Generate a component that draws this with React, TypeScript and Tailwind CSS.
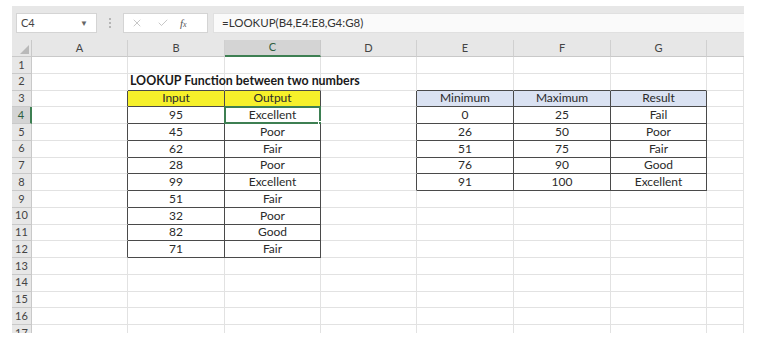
import React from "react";
import { X, Check } from "lucide-react";

const input: [string, string][] = [
  ["95", "Excellent"],
  ["45", "Poor"],
  ["62", "Fair"],
  ["28", "Poor"],
  ["99", "Excellent"],
  ["51", "Fair"],
  ["32", "Poor"],
  ["82", "Good"],
  ["71", "Fair"],
];
const lookup: [string, string, string][] = [
  ["0", "25", "Fail"],
  ["26", "50", "Poor"],
  ["51", "75", "Fair"],
  ["76", "90", "Good"],
  ["91", "100", "Excellent"],
];

function cellText(r: number, c: number): string {
  if (r === 3) {
    if (c === 2) return "Input";
    if (c === 3) return "Output";
    if (c === 5) return "Minimum";
    if (c === 6) return "Maximum";
    if (c === 7) return "Result";
  }
  if (r >= 4 && r <= 12) {
    if (c === 2) return input[r - 4][0];
    if (c === 3) return input[r - 4][1];
  }
  if (r >= 4 && r <= 8) {
    if (c >= 5 && c <= 7) return lookup[r - 4][c - 5];
  }
  return "";
}

function inT1(r: number, c: number) {
  return r >= 3 && r <= 12 && c >= 2 && c <= 3;
}
function inT2(r: number, c: number) {
  return r >= 3 && r <= 8 && c >= 5 && c <= 7;
}

function Cell({ r, c }: { r: number; c: number }) {
  const rightDark =
    inT1(r, c) || inT2(r, c) || (c === 1 && r >= 3 && r <= 12) || (c === 4 && r >= 3 && r <= 8);
  const bottomDark =
    inT1(r, c) || inT2(r, c) || (r === 2 && (c === 2 || c === 3 || (c >= 5 && c <= 7)));
  const yellow = r === 3 && (c === 2 || c === 3);
  const blue = r === 3 && c >= 5 && c <= 7;
  const text = cellText(r, c);
  const selected = r === 4 && c === 3;
  return (
    <div
      className={`relative h-[16.75px] border-r border-b flex items-center justify-center text-[12px] leading-none text-[#2a2a2a] ${
        rightDark ? "border-r-[#4a4a4a]" : "border-r-[#e2e2e2]"
      } ${bottomDark ? "border-b-[#4a4a4a]" : "border-b-[#e2e2e2]"} ${
        yellow ? "bg-[#f6f02a]" : blue ? "bg-[#dae2f2]" : "bg-white"
      }`}
    >
      {r === 2 && c === 2 ? (
        <span className="absolute left-[2px] top-0 h-full flex items-center whitespace-nowrap font-bold text-[12.4px] text-[#1a1a1a] z-10">
          LOOKUP Function between two numbers
        </span>
      ) : (
        text && <span className="whitespace-nowrap">{text}</span>
      )}
      {selected && (
        <>
          <div className="absolute left-[-1px] top-[-1px] right-[-1px] bottom-[-1px] border-2 border-[#3d7f52] pointer-events-none" />
          <div className="absolute right-[-3px] bottom-[-3px] w-[5px] h-[5px] bg-[#3d7f52] border border-white" />
        </>
      )}
    </div>
  );
}

export default function App() {
  const letters = ["A", "B", "C", "D", "E", "F", "G", ""];
  const rows = Array.from({ length: 17 }, (_, i) => i + 1);
  return (
    <div
      className="w-[768px] h-[341px] bg-white overflow-hidden"
      style={{ fontFamily: "Lato, 'Open Sans', sans-serif" }}
    >
      <div className="ml-[12px] mt-[6px] w-[732px] h-[327px] overflow-hidden bg-white">
        {/* toolbar */}
        <div className="h-[34px] bg-[#e7e7e7] flex items-start pt-[7px]">
          <div className="ml-[4px] w-[81px] h-[20px] bg-white border border-[#d4d4d4] flex items-center justify-between px-[4px]">
            <span className="text-[11px] text-[#444]">C4</span>
            <span className="text-[8px] text-[#666] mr-[4px]">▼</span>
          </div>
          <div className="w-[26px] h-[20px] flex flex-col items-center justify-center gap-[2px]">
            <div className="w-[2px] h-[2px] bg-[#b5b5b5]" />
            <div className="w-[2px] h-[2px] bg-[#b5b5b5]" />
            <div className="w-[2px] h-[2px] bg-[#b5b5b5]" />
          </div>
          <div className="w-[85px] h-[20px] bg-white border border-[#d4d4d4] flex items-center pl-[7px]">
            <X size={12} strokeWidth={1.3} color="#a8a8a8" />
            <Check size={12} strokeWidth={1.3} color="#a8a8a8" className="ml-[14px]" />
            <span
              className="ml-[11px] text-[11px] italic text-[#555]"
              style={{ fontFamily: "'Liberation Serif', serif" }}
            >
              f<span className="text-[8px]">x</span>
            </span>
          </div>
          <div className="ml-[5px] flex-1 h-[20px] bg-[#fafafa] border border-[#e0e0e0] border-r-0 flex items-center pl-[8px]">
            <span className="text-[11.5px] text-[#333]">=LOOKUP(B4,E4:E8,G4:G8)</span>
          </div>
        </div>
        {/* grid */}
        <div className="grid grid-cols-[20px_96px_97px_96px_96px_97px_97px_96px_37px]">
          {/* header row */}
          <div className="h-[17px] bg-[#e7e7e7] border-r border-b border-[#c9c9c9] relative">
            <div className="absolute right-[2px] bottom-[2px] w-0 h-0 border-l-[9px] border-l-transparent border-b-[9px] border-b-[#b9b9b9]" />
          </div>
          {letters.map((l, i) =>
            i === 2 ? (
              <div
                key={i}
                className="h-[17px] bg-[#d4d4d4] border-r border-r-[#c9c9c9] border-b-2 border-b-[#3d7f52] flex items-center justify-center text-[11px] text-[#2e5e3e]"
              >
                {l}
              </div>
            ) : (
              <div
                key={i}
                className={`h-[17px] bg-[#e7e7e7] border-b border-b-[#c9c9c9] flex items-center justify-center text-[11px] text-[#444] ${
                  i === 7 ? "" : "border-r border-r-[#d0d0d0]"
                }`}
              >
                {l}
              </div>
            )
          )}
          {rows.map((r) => (
            <React.Fragment key={r}>
              {r === 4 ? (
                <div className="h-[16.75px] bg-[#d4d4d4] border-r-2 border-r-[#3d7f52] border-b border-b-[#c9c9c9] flex items-center justify-center text-[11px] text-[#2e5e3e]">
                  {r}
                </div>
              ) : (
                <div className="h-[16.75px] bg-[#e7e7e7] border-r border-b border-[#c9c9c9] flex items-center justify-center text-[11px] text-[#444]">
                  {r}
                </div>
              )}
              {[1, 2, 3, 4, 5, 6, 7, 8].map((c) => (
                <Cell key={c} r={r} c={c} />
              ))}
            </React.Fragment>
          ))}
        </div>
      </div>
    </div>
  );
}
